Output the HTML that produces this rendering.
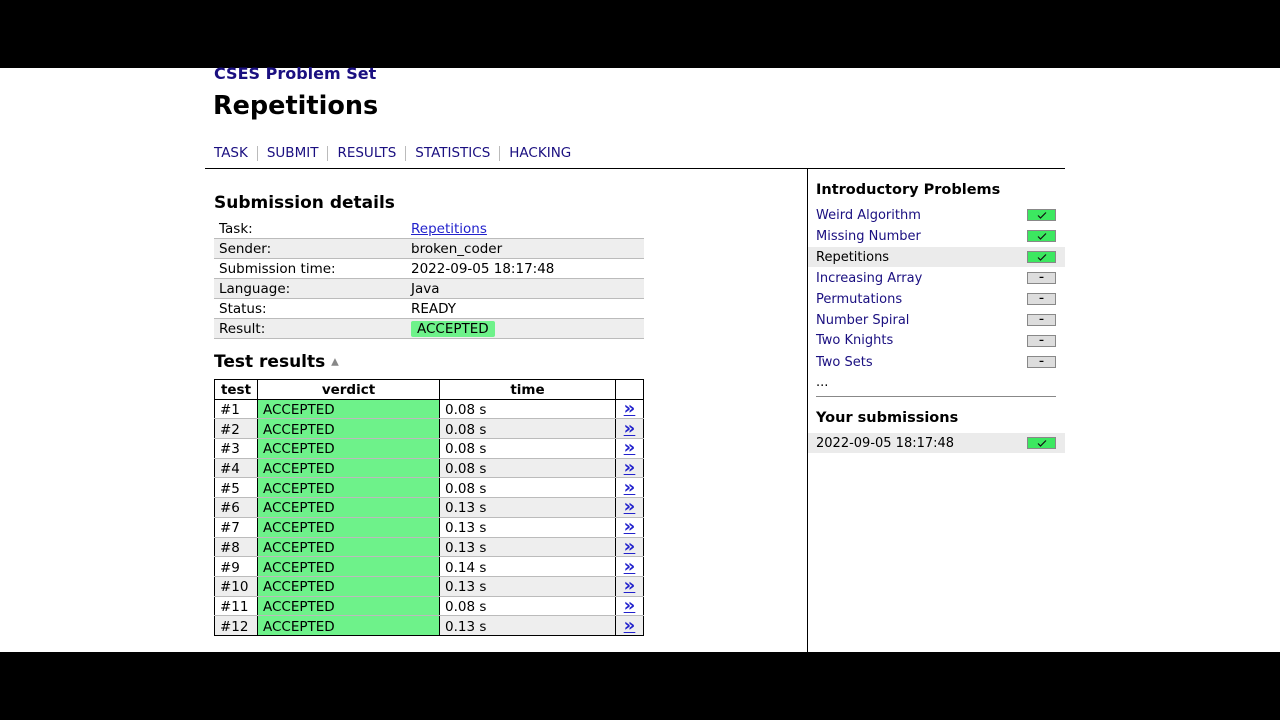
<!DOCTYPE html>
<html><head><meta charset="utf-8"><style>
*{margin:0;padding:0;box-sizing:border-box}
body{width:1280px;height:720px;background:#fff;position:relative;overflow:hidden;font-family:"DejaVu Sans","Liberation Sans",sans-serif;color:#000}
.a{position:absolute;white-space:nowrap}
.bar{position:absolute;left:0;width:1280px;background:#000}
.nav{color:#1a0f80;font-size:13.5px}
.nav span.sep{display:inline-block;width:1px;height:15px;background:#bbb;vertical-align:middle;margin:0 9px}
table{border-collapse:collapse;font-size:13.5px}
.det{position:absolute;left:214px;top:219px;width:430px}
.det td{height:19.7px;padding:2px 5px 0;border-bottom:1px solid #bbb;line-height:17px}
.det tr:nth-child(even) td{background:#eee}
.acc{background:#6ef28a;padding:0 6px;border-radius:2px}
.tr{position:absolute;left:214px;top:379px;width:430px}
.tr td,.tr th{border:1px solid #000;height:19.7px;padding:2px 5px 0;line-height:16px}
.tr th{font-weight:bold;text-align:center}
.tr td{border-top:none;border-bottom:1px solid #bbb}
.tr tr:last-child td{border-bottom:1px solid #000}
.tr tr:nth-child(odd) td{background:#eee}
.tr td.v{background:#6ef28a !important}
.tr td.l{text-align:center;color:#2222cc;font-weight:bold;text-decoration:underline;font-size:18px;line-height:14px;padding:0}
.side{position:absolute;left:816px;font-size:13px;color:#1a0f80}
.bd{position:absolute;left:1027px;width:29px;height:12px;border:1px solid #888;font-size:10px;text-align:center;line-height:10px}
.g{background:#3ce860;color:#111}
.gr{background:#ddd;color:#000;font-weight:bold}
.bd svg{display:block;margin:1px auto 0}
</style></head><body>
<div class="bar" style="top:0;height:68px"></div>
<div class="bar" style="top:652px;height:68px"></div>
<div class="a" style="left:214px;top:64px;font-size:16px;font-weight:bold;color:#1a0f80">CSES Problem Set</div>
<div class="a" style="left:213px;top:91px;font-size:25.5px;font-weight:bold">Repetitions</div>
<div class="a nav" style="left:214px;top:145px">TASK<span class="sep"></span>SUBMIT<span class="sep"></span>RESULTS<span class="sep"></span>STATISTICS<span class="sep"></span>HACKING</div>
<div class="a" style="left:205px;top:168px;width:860px;height:1px;background:#000"></div>
<div class="a" style="left:807px;top:168px;width:1px;height:484px;background:#000"></div>
<div class="a" style="left:214px;top:193px;font-size:17px;font-weight:bold">Submission details</div>
<table class="det">
<tr><td style="width:192px">Task:</td><td><a style="color:#2222cc;text-decoration:underline">Repetitions</a></td></tr>
<tr><td>Sender:</td><td>broken_coder</td></tr>
<tr><td>Submission time:</td><td>2022-09-05 18:17:48</td></tr>
<tr><td>Language:</td><td>Java</td></tr>
<tr><td>Status:</td><td>READY</td></tr>
<tr><td>Result:</td><td><span class="acc">ACCEPTED</span></td></tr>
</table>
<div class="a" style="left:214px;top:352px;font-size:17px;font-weight:bold">Test results <span style="font-size:10px;color:#888;vertical-align:middle">▲</span></div>
<svg width="0" height="0" style="position:absolute"><defs><symbol id="ck" viewBox="0 0 12 8"><path d="M2 4.5 L4.5 7 L10 1.5" fill="none" stroke="#111" stroke-width="1.2"/></symbol></defs></svg>
<table class="tr">
<tr><th style="width:43px">test</th><th style="width:182px">verdict</th><th style="width:176px">time</th><th></th></tr>
<tr><td>#1</td><td class="v">ACCEPTED</td><td>0.08 s</td><td class="l">»</td></tr>
<tr><td>#2</td><td class="v">ACCEPTED</td><td>0.08 s</td><td class="l">»</td></tr>
<tr><td>#3</td><td class="v">ACCEPTED</td><td>0.08 s</td><td class="l">»</td></tr>
<tr><td>#4</td><td class="v">ACCEPTED</td><td>0.08 s</td><td class="l">»</td></tr>
<tr><td>#5</td><td class="v">ACCEPTED</td><td>0.08 s</td><td class="l">»</td></tr>
<tr><td>#6</td><td class="v">ACCEPTED</td><td>0.13 s</td><td class="l">»</td></tr>
<tr><td>#7</td><td class="v">ACCEPTED</td><td>0.13 s</td><td class="l">»</td></tr>
<tr><td>#8</td><td class="v">ACCEPTED</td><td>0.13 s</td><td class="l">»</td></tr>
<tr><td>#9</td><td class="v">ACCEPTED</td><td>0.14 s</td><td class="l">»</td></tr>
<tr><td>#10</td><td class="v">ACCEPTED</td><td>0.13 s</td><td class="l">»</td></tr>
<tr><td>#11</td><td class="v">ACCEPTED</td><td>0.08 s</td><td class="l">»</td></tr>
<tr><td>#12</td><td class="v">ACCEPTED</td><td>0.13 s</td><td class="l">»</td></tr>
</table>
<div class="a" style="left:816px;top:182px;font-size:14.5px;font-weight:bold">Introductory Problems</div>
<div class="a" style="left:808px;top:247px;width:257px;height:20px;background:#ebebeb"></div>
<div class="a side" style="top:208px">Weird Algorithm</div>
<div class="a side" style="top:229px">Missing Number</div>
<div class="a side" style="top:250px;color:#000">Repetitions</div>
<div class="a side" style="top:271px">Increasing Array</div>
<div class="a side" style="top:292px">Permutations</div>
<div class="a side" style="top:313px">Number Spiral</div>
<div class="a side" style="top:333px">Two Knights</div>
<div class="a side" style="top:355px">Two Sets</div>
<div class="a side" style="top:375px;color:#000">...</div>
<div class="bd g" style="top:209px"><svg width="12" height="8"><use href="#ck"/></svg></div>
<div class="bd g" style="top:230px"><svg width="12" height="8"><use href="#ck"/></svg></div>
<div class="bd g" style="top:251px"><svg width="12" height="8"><use href="#ck"/></svg></div>
<div class="bd gr" style="top:292px;top:272px">–</div>
<div class="bd gr" style="top:293px">–</div>
<div class="bd gr" style="top:314px">–</div>
<div class="bd gr" style="top:335px">–</div>
<div class="bd gr" style="top:356px">–</div>
<div class="a" style="left:816px;top:396px;width:240px;height:1px;background:#888"></div>
<div class="a" style="left:816px;top:410px;font-size:14.5px;font-weight:bold">Your submissions</div>
<div class="a" style="left:808px;top:433px;width:257px;height:20px;background:#ebebeb"></div>
<div class="a side" style="top:436px;color:#000">2022-09-05 18:17:48</div>
<div class="bd g" style="top:437px"><svg width="12" height="8"><use href="#ck"/></svg></div>
</body></html>
